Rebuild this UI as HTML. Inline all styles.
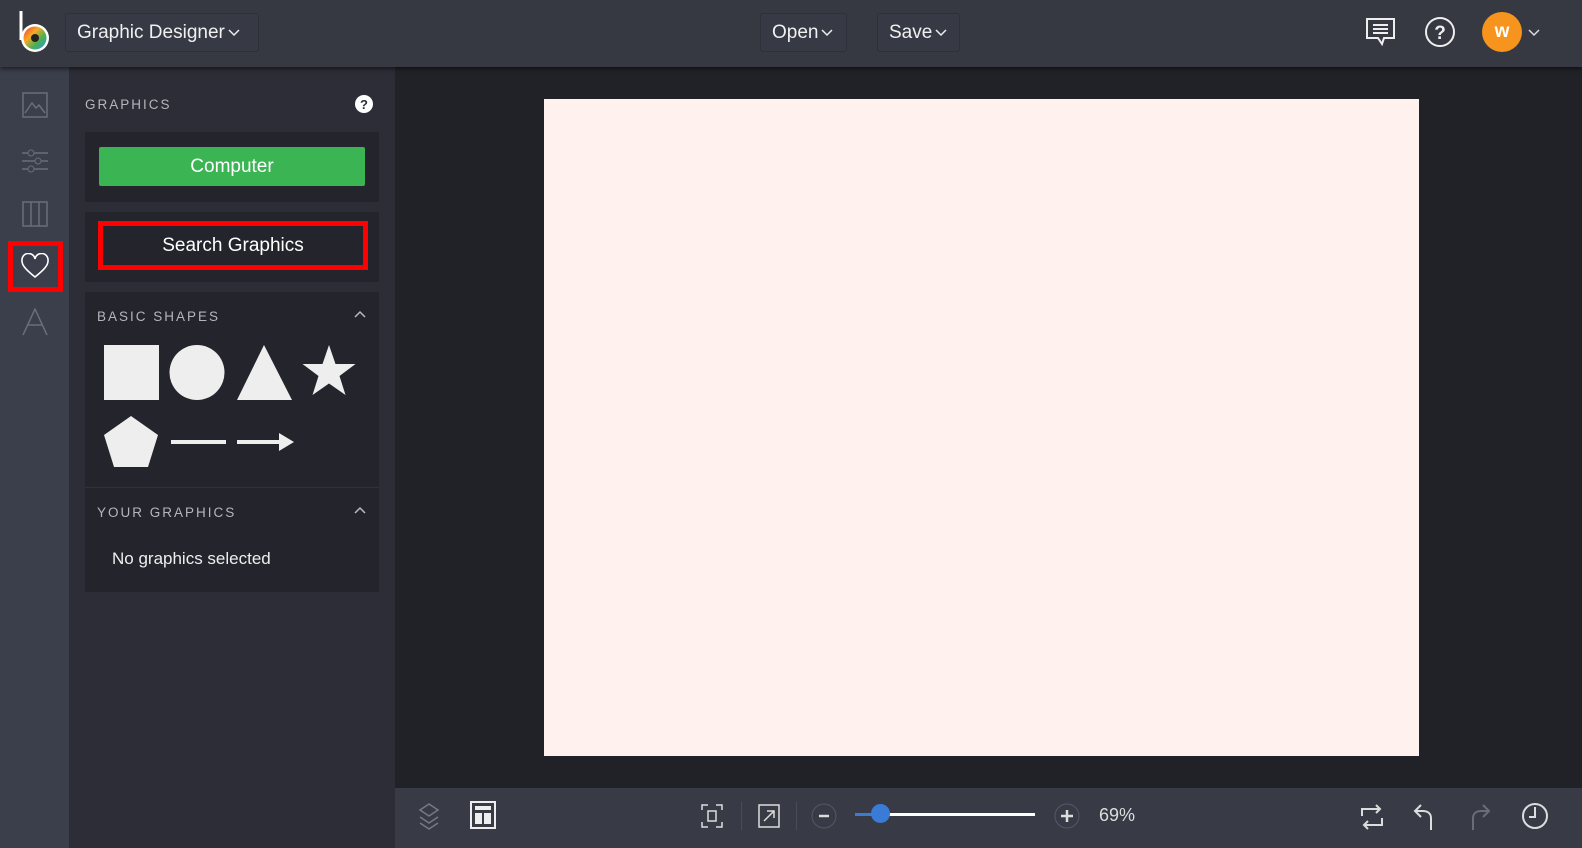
<!DOCTYPE html>
<html><head><style>
*{margin:0;padding:0;box-sizing:border-box}
body{width:1582px;height:848px;overflow:hidden;background:#212227;font-family:"Liberation Sans",sans-serif;position:relative;color:#eee}
.abs{position:absolute}
.top{left:0;top:0;width:1582px;height:67px;background:#363842;box-shadow:0 2px 4px rgba(0,0,0,.5);z-index:2}
.btn{position:absolute;top:13px;height:39px;border:1px solid #2e3038;border-radius:3px;background:#373944;font-size:19px;color:#f0f0f0;line-height:37px;padding:0 11px;white-space:nowrap}
.chev{display:inline-block;vertical-align:middle;margin-left:3px}
.rail{left:0;top:67px;width:69px;height:781px;background:#3b3e4b}
.panel{left:69px;top:67px;width:326px;height:781px;background:#2c2d36}
.card{position:absolute;left:16px;width:294px;background:#23242c}
.lbl{font-size:13.5px;letter-spacing:2px;color:#b5b5bb}
.bot{left:395px;top:788px;width:1187px;height:60px;background:#383a45}
</style></head><body>
<div class="abs top">
 <svg class="abs" style="left:17px;top:10px" width="34" height="44" viewBox="0 0 34 44"><line x1="4" y1="1" x2="4" y2="30" stroke="#fff" stroke-width="3"/><circle cx="18" cy="28" r="14" fill="#fff"/><circle cx="18" cy="28" r="11.5" fill="url(#g)"/><defs><linearGradient id="g" x1="0" y1="0" x2="1" y2="1"><stop offset="0" stop-color="#e33"/><stop offset=".35" stop-color="#f9a825"/><stop offset=".65" stop-color="#4caf50"/><stop offset="1" stop-color="#2196f3"/></linearGradient></defs><circle cx="18" cy="28" r="4" fill="#222"/></svg>
 <div class="btn" style="left:65px;width:194px">Graphic Designer<svg class="chev" width="12" height="8"><path d="M1 1l5 5 5-5" fill="none" stroke="#eee" stroke-width="1.5"/></svg></div>
 <div class="btn" style="left:760px;width:87px">Open<svg class="chev" width="12" height="8"><path d="M1 1l5 5 5-5" fill="none" stroke="#eee" stroke-width="1.5"/></svg></div>
 <div class="btn" style="left:877px;width:83px">Save<svg class="chev" width="12" height="8"><path d="M1 1l5 5 5-5" fill="none" stroke="#eee" stroke-width="1.5"/></svg></div>
 <svg class="abs" style="left:1364px;top:17px" width="34" height="32" viewBox="0 0 34 32"><path d="M3 2h27v19H20l-2 6-4-6H3z" fill="none" stroke="#eee" stroke-width="2"/><path d="M9 8h15M9 12h15M9 16h15" stroke="#eee" stroke-width="2"/></svg>
 <svg class="abs" style="left:1424px;top:16px" width="32" height="32"><circle cx="16" cy="16" r="14" fill="none" stroke="#eee" stroke-width="2"/><text x="16" y="23" text-anchor="middle" font-size="19" font-weight="bold" fill="#eee" font-family="Liberation Sans">?</text></svg>
 <div class="abs" style="left:1482px;top:12px;width:40px;height:40px;border-radius:50%;background:#f7941d;color:#fff;font-weight:bold;font-size:19px;text-align:center;line-height:40px">w</div>
 <svg class="abs" style="left:1528px;top:29px" width="12" height="8"><path d="M1 1l5 5 5-5" fill="none" stroke="#ddd" stroke-width="1.5"/></svg>
</div>
<div class="abs rail">
 <svg class="abs" style="left:22px;top:25px" width="26" height="26"><rect x="1" y="1" width="24" height="24" fill="none" stroke="#6a6d7a" stroke-width="1.5"/><path d="M3 21l7-10 4 5 3-3 6 8" fill="none" stroke="#6a6d7a" stroke-width="1.5"/></svg>
 <svg class="abs" style="left:22px;top:80px" width="26" height="26"><path d="M0 6h26M0 14h26M0 22h26" stroke="#6a6d7a" stroke-width="1.5"/><circle cx="9" cy="6" r="3" fill="#3b3e4b" stroke="#6a6d7a"/><circle cx="16" cy="14" r="3" fill="#3b3e4b" stroke="#6a6d7a"/><circle cx="9" cy="22" r="3" fill="#3b3e4b" stroke="#6a6d7a"/></svg>
 <svg class="abs" style="left:22px;top:134px" width="26" height="26"><rect x="1" y="1" width="24" height="24" fill="none" stroke="#6a6d7a" stroke-width="1.5"/><path d="M9 1v24M17 1v24" stroke="#6a6d7a" stroke-width="1.5"/></svg>
 <div class="abs" style="left:8px;top:174px;width:55px;height:51px;border:5px solid #f00"></div>
 <svg class="abs" style="left:21px;top:186px" width="28" height="26"><path d="M14 24C4 16 1 12 1 8a6.5 6.5 0 0113-2 6.5 6.5 0 0113 2c0 4-3 8-13 16z" fill="none" stroke="#fff" stroke-width="1.6"/></svg>
 <svg class="abs" style="left:22px;top:241px" width="26" height="28"><path d="M1 27L13 1l12 26M6 17h14" fill="none" stroke="#6a6d7a" stroke-width="1.5"/></svg>
</div>
<div class="abs panel">
 <div class="abs lbl" style="left:16px;top:30px">GRAPHICS</div>
 <svg class="abs" style="left:286px;top:28px" width="18" height="18"><circle cx="9" cy="9" r="9" fill="#fff"/><text x="9" y="14" text-anchor="middle" font-size="13" font-weight="bold" fill="#2c2d36" font-family="Liberation Sans">?</text></svg>
 <div class="card" style="top:65px;height:70px"><div class="abs" style="left:14px;top:15px;width:266px;height:39px;background:#3bb454;border-radius:2px;text-align:center;line-height:39px;font-size:19px;color:#fff">Computer</div></div>
 <div class="card" style="top:145px;height:70px"><div class="abs" style="left:13px;top:9px;width:270px;height:49px;border:5px solid #f00;background:#23242c;text-align:center;line-height:39px;font-size:19px;color:#fff">Search Graphics</div></div>
 <div class="card" style="top:225px;height:300px">
  <div class="abs lbl" style="left:12px;top:17px">BASIC SHAPES</div>
  <svg class="abs" style="left:269px;top:18px" width="12" height="8"><path d="M1 7l5-5 5 5" fill="none" stroke="#bbb" stroke-width="1.5"/></svg>
  <svg class="abs" style="left:18px;top:53px" width="260" height="125"><g fill="#eee"><rect x="1" y="0" width="55" height="55"/><circle cx="94" cy="27.5" r="27.5"/><path d="M161 0l28 55h-55z"/><path d="M226 0l6.5 19h20l-16 12 6 19-16.5-11.5-16.5 11.5 6-19-16-12h20z"/><path d="M28 71l27 19-10 32H11L1 90z"/><rect x="68" y="95" width="55" height="4"/><path d="M134 95h42v-7l15 9-15 9v-7h-42z"/></g></svg>
  <div class="abs" style="left:0;top:195px;width:294px;height:1px;background:#30313a"></div>
  <div class="abs lbl" style="left:12px;top:213px">YOUR GRAPHICS</div>
  <svg class="abs" style="left:269px;top:214px" width="12" height="8"><path d="M1 7l5-5 5 5" fill="none" stroke="#bbb" stroke-width="1.5"/></svg>
  <div class="abs" style="left:27px;top:257px;font-size:17px;color:#eee">No graphics selected</div>
 </div>
</div>
<div class="abs" style="left:544px;top:99px;width:875px;height:657px;background:#fff2ee"></div>
<div class="abs bot">
 <svg class="abs" style="left:21px;top:14px" width="26" height="30"><path d="M13 2l9 6-9 6-9-6z M4 15l9 6 9-6 M4 21l9 6 9-6" fill="none" stroke="#777a85" stroke-width="1.5"/></svg>
 <svg class="abs" style="left:75px;top:13px" width="26" height="28"><rect x="1" y="1" width="24" height="26" fill="none" stroke="#eee" stroke-width="2"/><rect x="5" y="5" width="16" height="4" fill="#eee"/><rect x="5" y="12" width="7" height="11" fill="#eee"/><rect x="14" y="12" width="7" height="11" fill="#eee"/></svg>
 <svg class="abs" style="left:306px;top:16px" width="22" height="24"><path d="M1 6V1h6M15 1h6v5M21 18v5h-6M7 23H1v-5" fill="none" stroke="#ddd" stroke-width="1.5"/><rect x="7" y="7" width="8" height="10" fill="none" stroke="#ddd" stroke-width="1.5"/></svg>
 <div class="abs" style="left:346px;top:14px;width:1px;height:28px;background:#4a4c57"></div>
 <svg class="abs" style="left:363px;top:16px" width="22" height="24"><rect x="1" y="1" width="20" height="22" fill="none" stroke="#ddd" stroke-width="1.5"/><path d="M6 17l10-10M9 7h7v7" fill="none" stroke="#ddd" stroke-width="1.5"/></svg>
 <div class="abs" style="left:401px;top:14px;width:1px;height:28px;background:#4a4c57"></div>
 <svg class="abs" style="left:416px;top:14px" width="26" height="28"><circle cx="13" cy="14" r="12" fill="none" stroke="#555866"/><path d="M8 14h10" stroke="#ddd" stroke-width="2.5"/></svg>
 <div class="abs" style="left:460px;top:25px;width:180px;height:3px;background:#fff"></div>
 <div class="abs" style="left:460px;top:25px;width:24px;height:3px;background:#3a7bd5"></div>
 <div class="abs" style="left:476px;top:16px;width:19px;height:19px;border-radius:50%;background:#3a7bd5"></div>
 <svg class="abs" style="left:659px;top:14px" width="26" height="28"><circle cx="13" cy="14" r="12" fill="none" stroke="#555866"/><path d="M7 14h12M13 8v12" stroke="#ddd" stroke-width="2.5"/></svg>
 <div class="abs" style="left:704px;top:17px;font-size:18px;color:#ddd">69%</div>
 <svg class="abs" style="left:964px;top:14px" width="26" height="30"><path d="M3 14V7h18M17 3l4 4-4 4M23 16v7H5M9 19l-4 4 4 4" fill="none" stroke="#ddd" stroke-width="2"/></svg>
 <svg class="abs" style="left:1018px;top:14px" width="24" height="30"><path d="M18 28V16c0-5-4-7-8-7H3M8 3L2 9l6 6" fill="none" stroke="#ddd" stroke-width="2"/></svg>
 <svg class="abs" style="left:1072px;top:14px" width="24" height="30"><path d="M6 28V16c0-5 4-7 8-7h7M16 3l6 6-6 6" fill="none" stroke="#6a6d78" stroke-width="2"/></svg>
 <svg class="abs" style="left:1126px;top:13px" width="28" height="30"><circle cx="14" cy="15" r="12" fill="none" stroke="#ddd" stroke-width="2"/><path d="M14 6v10H8" fill="none" stroke="#ddd" stroke-width="2"/></svg>
</div>
</body></html>
